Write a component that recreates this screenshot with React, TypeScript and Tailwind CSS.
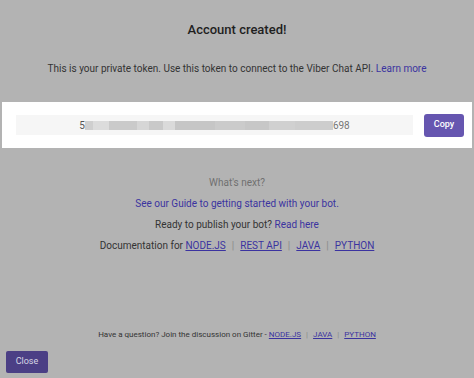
import React from 'react';

const font = { fontFamily: 'Roboto, "Liberation Sans", sans-serif' };

function Sep() {
  return <span className="mx-[6px] text-[#8a8a8a]">|</span>;
}

export default function App() {
  return (
    <div
      className="w-[474px] h-[378px] bg-[#b3b3b3] flex flex-col items-center overflow-hidden text-[#2b2b2b]"
      style={font}
    >
      <h1 className="mt-[21px] text-[13px] font-medium leading-[18px] text-[#1f1f1f]">Account created!</h1>
      <p className="mt-[23px] text-[10px] leading-[14px] text-[#333]">
        This is your private token. Use this token to connect to the Viber Chat API.{' '}
        <a className="text-[#3b33a0]">Learn more</a>
      </p>

      <div className="mt-[26px] w-[470px] h-[46px] bg-white flex items-center pl-[14px] pr-[8px] gap-[11px]">
        <div className="flex-1 h-[20px] bg-[#f6f6f6] flex items-center justify-center text-[10px] text-[#555]">
          <span>5</span>
          <div className="w-[248px] h-[9px] flex">
            <div className="w-[8px] bg-[#cfcfcf]" />
            <div className="w-[16px] bg-[#dcdcdc]" />
            <div className="w-[28px] bg-[#cacaca]" />
            <div className="w-[12px] bg-[#d6d6d6]" />
            <div className="w-[14px] bg-[#c9c9c9]" />
            <div className="w-[12px] bg-[#dadada]" />
            <div className="w-[40px] bg-[#c6c6c6]" />
            <div className="w-[30px] bg-[#cbcbcb]" />
            <div className="w-[24px] bg-[#c7c7c7]" />
            <div className="w-[26px] bg-[#d0d0d0]" />
            <div className="w-[38px] bg-[#cdcdcd]" />
          </div>
          <span className="text-[#777]">698</span>
        </div>
        <button className="w-[40px] h-[23px] rounded-[3px] bg-[#6656b0] text-white text-[9px] font-medium">
          Copy
        </button>
      </div>

      <p className="mt-[28px] text-[10px] leading-[14px] text-[#707070]">What's next?</p>
      <p className="mt-[7px] text-[10px] leading-[14px] text-[#3b33a0]">See our Guide to getting started with your bot.</p>
      <p className="mt-[7px] text-[10px] leading-[14px] text-[#333]">
        Ready to publish your bot? <a className="text-[#3b33a0]">Read here</a>
      </p>
      <p className="mt-[7px] text-[10px] leading-[14px] text-[#333]">
        Documentation for <a className="underline text-[#3b33a0]">NODE.JS</a>
        <Sep />
        <a className="underline text-[#3b33a0]">REST API</a>
        <Sep />
        <a className="underline text-[#3b33a0]">JAVA</a>
        <Sep />
        <a className="underline text-[#3b33a0]">PYTHON</a>
      </p>

      <p className="mt-[77px] text-[8px] leading-[10px] text-[#333]">
        Have a question? Join the discussion on Gitter - <a className="underline text-[#3b33a0]">NODE.JS</a>
        <span className="mx-[5px] text-[#8a8a8a]">|</span>
        <a className="underline text-[#3b33a0]">JAVA</a>
        <span className="mx-[5px] text-[#8a8a8a]">|</span>
        <a className="underline text-[#3b33a0]">PYTHON</a>
      </p>

      <div className="self-stretch mt-[7px] pl-[6px]">
        <button className="w-[42px] h-[22px] rounded-[2px] bg-[#4b3f85] text-[#d8d8e6] text-[9px]">Close</button>
      </div>
    </div>
  );
}
